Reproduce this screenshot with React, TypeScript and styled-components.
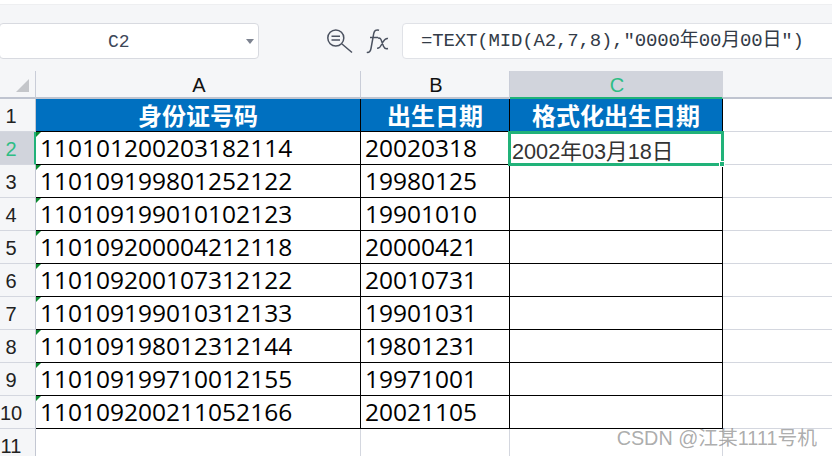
import React from 'react';
import styled, { createGlobalStyle } from 'styled-components';

const GlobalStyle = createGlobalStyle`
  html, body { margin: 0; padding: 0; background: #fff; }
  body { width: 832px; height: 456px; overflow: hidden; font-family: "Liberation Sans", "Noto Sans CJK SC", sans-serif; }
`;

const Page = styled.div`
  position: relative;
  width: 832px;
  height: 456px;
  overflow: hidden;
  display: flex;
  flex-direction: column;
`;

const TopStrip = styled.div`
  height: 4px;
  background: #fff;
  flex: none;
`;

const Toolbar = styled.div`
  flex: none;
  height: 67px;
  box-sizing: border-box;
  background: #f5f6f8;
  border-top: 1px solid #eeeff1;
  padding: 18px 0 0 0;
  display: flex;
  align-items: flex-start;
`;

const NameBox = styled.div`
  width: 260px;
  height: 36px;
  flex: none;
  margin-left: -1px;
  box-sizing: border-box;
  background: #fff;
  border: 1px solid #d8dae0;
  border-radius: 4px;
  display: flex;
  align-items: center;
  position: relative;
  padding: 2px 0 0 108px;
  font-family: "Liberation Mono", monospace;
  font-size: 18px;
  color: #3d4757;
`;

const Caret = styled.span`
  position: absolute;
  right: 4px;
  top: 15px;
  width: 0;
  height: 0;
  border-left: 4px solid transparent;
  border-right: 4px solid transparent;
  border-top: 5px solid #7d8390;
`;

const IconSlot = styled.div<{ $gap: number }>`
  width: 26px;
  height: 26px;
  margin-left: ${({ $gap }) => $gap}px;
  margin-top: 6px;
  flex: none;
`;

const Formula = styled.div`
  margin-left: 10px;
  width: 440px;
  height: 36px;
  flex: none;
  box-sizing: border-box;
  background: #fff;
  border: 1px solid #e0e2e7;
  border-radius: 4px;
  display: flex;
  align-items: center;
  padding: 0 0 6px 18px;
  font-family: "Liberation Mono", "Noto Sans CJK SC", monospace;
  font-size: 19px;
  letter-spacing: -0.15px;
  color: #333b47;
  white-space: nowrap;
`;

const Sheet = styled.div`
  display: grid;
  grid-template-columns: 36px 325px 149px 213px 1fr;
  grid-template-rows: 28px repeat(11, 33px);
  background: #fff;
`;

const Corner = styled.div`
  background: #f5f6f8;
  border-right: 1px solid #c9cdd8;
  border-bottom: 2px solid #bfc4d0;
  box-sizing: border-box;
  position: relative;
  &::after {
    content: '';
    position: absolute;
    right: 6px;
    bottom: 5px;
    border-left: 13px solid transparent;
    border-bottom: 13px solid #c4c6ca;
  }
`;

const ColHead = styled.div<{ $active?: boolean }>`
  box-sizing: border-box;
  background: ${({ $active }) => ($active ? '#d1d4dc' : '#f5f6f8')};
  border-right: 1px solid ${({ $active }) => ($active ? '#d1d4dc' : '#c9cdd8')};
  border-bottom: 2px solid ${({ $active }) => ($active ? '#21b279' : '#bfc4d0')};
  color: ${({ $active }) => ($active ? '#2ebd85' : '#111')};
  display: flex;
  align-items: center;
  justify-content: center;
  padding: 3px 0 0 2px;
  font-size: 20px;
`;

const FillHead = styled.div`
  background: #f5f6f8;
  border-bottom: 2px solid #bfc4d0;
  box-sizing: border-box;
`;

const RowHead = styled.div<{ $active?: boolean }>`
  box-sizing: border-box;
  background: ${({ $active }) => ($active ? '#d1d4dc' : '#f5f6f8')};
  border-right: ${({ $active }) => ($active ? '2px solid #21b279' : '1px solid #c3c7d2')};
  border-bottom: 1px solid #d4d7df;
  color: ${({ $active }) => ($active ? '#2ebd85' : '#222')};
  font-size: 20px;
  display: flex;
  align-items: center;
  justify-content: center;
  padding: 2px ${({ $active }) => ($active ? 12 : 13)}px 0 0;
`;

const TitleCell = styled.div`
  box-sizing: border-box;
  background: #0070c0;
  border-right: 1px solid #000;
  border-bottom: 1px solid #000;
  color: #fff;
  font-family: "Noto Sans CJK SC", sans-serif;
  font-weight: 700;
  font-size: 24px;
  display: flex;
  align-items: center;
  justify-content: center;
  padding-bottom: 2px;
`;

const DataCell = styled.div<{ $flag?: boolean }>`
  box-sizing: border-box;
  position: relative;
  border-right: 1px solid #000;
  border-bottom: 1px solid #000;
  color: #000;
  font-family: "Open Sans", "Liberation Sans", sans-serif;
  font-size: 24.5px;
  line-height: 31px;
  padding-left: 4px;
  white-space: nowrap;
  &::before {
    content: '';
    display: ${({ $flag }) => ($flag ? 'block' : 'none')};
    position: absolute;
    left: 0;
    top: 0;
    border-top: 5px solid #0a8a2e;
    border-right: 5px solid transparent;
  }
`;

const ResultCell = styled.div`
  box-sizing: border-box;
  position: relative;
  margin: -1px -1px -1px -2px;
  border: 3px solid #21b279;
  background: #fff;
  color: #333;
  font-size: 21.7px;
  font-family: "Liberation Sans", "Noto Sans CJK SC", sans-serif;
  padding: 7px 0 0 1px;
  line-height: 22px;
  white-space: nowrap;
  z-index: 1;
`;

const FillHandle = styled.span`
  position: absolute;
  right: -4px;
  bottom: -4px;
  box-sizing: border-box;
  width: 6px;
  height: 6px;
  background: #21b279;
  border: 1px solid #fff;
`;

const EmptyCell = styled.div`
  box-sizing: border-box;
  border-right: 1px solid #000;
  border-bottom: 1px solid #000;
`;

const GridCell = styled.div`
  box-sizing: border-box;
  border-right: 1px solid #d4d7df;
  border-bottom: 1px solid #d4d7df;
`;

const OuterCell = styled.div`
  box-sizing: border-box;
  border-bottom: 1px solid #d4d7df;
`;

const Watermark = styled.div`
  position: absolute;
  right: 15px;
  bottom: 5px;
  font-family: "Liberation Sans", "Noto Sans CJK SC", sans-serif;
  font-size: 19.8px;
  color: rgba(120, 120, 120, 0.62);
  white-space: nowrap;
`;

const rows = [
  ['110101200203182114', '20020318'],
  ['110109199801252122', '19980125'],
  ['110109199010102123', '19901010'],
  ['110109200004212118', '20000421'],
  ['110109200107312122', '20010731'],
  ['110109199010312133', '19901031'],
  ['110109198012312144', '19801231'],
  ['110109199710012155', '19971001'],
  ['110109200211052166', '20021105'],
];

function ZoomIcon() {
  return (
    <svg width="26" height="26" viewBox="0 0 26 26" fill="none" stroke="#4b5260" strokeWidth="1.5">
      <circle cx="8.8" cy="9" r="8" />
      <path d="M4.5 7.2h8.5M4.5 11h8.5M15 15l10 8.5" />
    </svg>
  );
}

function FxIcon() {
  return (
    <svg width="26" height="26" viewBox="0 0 26 26" fill="none" stroke="#4b5260" strokeWidth="1.5">
      <path d="M13 1.2c-3-1-4.6.5-5.2 3L5 19.5c-.6 3-2 4.4-4.2 3.8M4 8.5h8" />
      <path d="M12 9.2c2.5-.5 3 1 4 4l1.500 4c.8 2 2 3 4.500 2.300M22 9.500c-2-.5-3.300.5-5 3.500l-2 3.500c-1 2-2.300 3-3.800 2.500" />
    </svg>
  );
}

export default function App() {
  return (
    <Page>
      <GlobalStyle />
      <TopStrip />
      <Toolbar>
        <NameBox>
          C2
          <Caret />
        </NameBox>
        <IconSlot $gap={68}>
          <ZoomIcon />
        </IconSlot>
        <IconSlot $gap={13}>
          <FxIcon />
        </IconSlot>
        <Formula>=TEXT(MID(A2,7,8),"0000年00月00日")</Formula>
      </Toolbar>
      <Sheet>
        <Corner />
        <ColHead>A</ColHead>
        <ColHead>B</ColHead>
        <ColHead $active>C</ColHead>
        <FillHead />

        <RowHead>1</RowHead>
        <TitleCell>身份证号码</TitleCell>
        <TitleCell>出生日期</TitleCell>
        <TitleCell>格式化出生日期</TitleCell>
        <OuterCell />

        {rows.map((row, i) => (
          <React.Fragment key={row[0]}>
            <RowHead $active={i === 0}>{i + 2}</RowHead>
            <DataCell $flag>{row[0]}</DataCell>
            <DataCell>{row[1]}</DataCell>
            {i === 0 ? (
              <ResultCell>
                2002年03月18日
                <FillHandle />
              </ResultCell>
            ) : (
              <EmptyCell />
            )}
            <OuterCell />
          </React.Fragment>
        ))}

        <RowHead>11</RowHead>
        <GridCell />
        <GridCell />
        <GridCell />
        <OuterCell />
      </Sheet>
      <Watermark>CSDN @江某1111号机</Watermark>
    </Page>
  );
}
